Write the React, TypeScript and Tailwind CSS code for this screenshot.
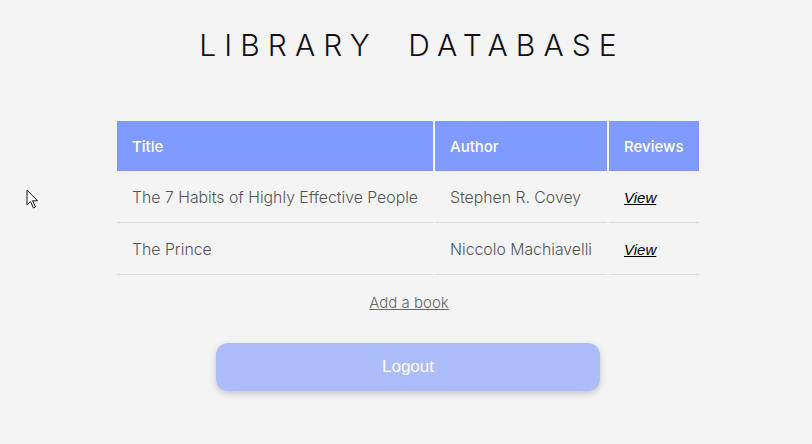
import React from "react";

const BOOKS = [
  { title: "The 7 Habits of Highly Effective People", author: "Stephen R. Covey" },
  { title: "The Prince", author: "Niccolo Machiavelli" },
];

function Cursor() {
  return (
    <svg
      className="absolute left-[26px] top-[189px]"
      width="14"
      height="21"
      viewBox="0 0 14 21"
    >
      <path
        d="M1 1 L1 16 L4.5 12.5 L7.5 19 L9.5 18 L6.5 11.8 L11.5 11.8 Z"
        fill="#fff"
        stroke="#111"
        strokeWidth="1"
        strokeLinejoin="round"
      />
    </svg>
  );
}

export default function App() {
  return (
    <div className="relative min-h-[444px] w-full bg-[#f4f4f4] font-['Inter',sans-serif] text-[#555]">
      <Cursor />
      <h1 className="pl-[12px] pt-[26px] text-center text-[30px] font-light leading-[38px] tracking-[0.27em] text-[#111] [word-spacing:14px]">
        LIBRARY DATABASE
      </h1>

      <div className="mt-[57px] flex justify-center">
        <table className="ml-[4px] w-[586px] table-fixed border-separate border-spacing-x-[2px] border-spacing-y-0 text-left">
          <colgroup>
            <col className="w-[316px]" />
            <col className="w-[172px]" />
            <col className="w-[90px]" />
          </colgroup>
          <thead>
            <tr className="bg-[#7f9bff] text-[15px] text-white">
              <th className="h-[50px] px-[15px] pt-[2px] font-medium">Title</th>
              <th className="px-[15px] pt-[2px] font-medium">Author</th>
              <th className="px-[15px] pt-[2px] font-medium">Reviews</th>
            </tr>
          </thead>
          <tbody className="text-[15.8px] font-light">
            {BOOKS.map((b) => (
              <tr key={b.title}>
                <td className="h-[52px] whitespace-nowrap border-b border-[#dddddd] px-[15px] pt-[3px]">{b.title}</td>
                <td className="whitespace-nowrap border-b border-[#dddddd] pl-[15px] pt-[3px]">{b.author}</td>
                <td className="border-b border-[#dddddd] px-[15px] pt-[3px]">
                  <a href="#" className="font-['Liberation_Sans',sans-serif] text-[15px] font-normal italic text-black underline">
                    View
                  </a>
                </td>
              </tr>
            ))}
          </tbody>
        </table>
      </div>

      <div className="mt-[15px] pl-[6px] text-center">
        <a href="#" className="text-[15px] font-light text-[#666] underline">
          Add a book
        </a>
      </div>

      <div className="mt-[28px] flex justify-center">
        <button
          type="button"
          className="ml-[4px] h-[48px] w-[384px] rounded-[12px] bg-[#adbdfc] font-['Liberation_Sans',sans-serif] text-[17px] text-white shadow-[0_3px_6px_rgba(0,0,0,0.18)]"
        >
          Logout
        </button>
      </div>
    </div>
  );
}
